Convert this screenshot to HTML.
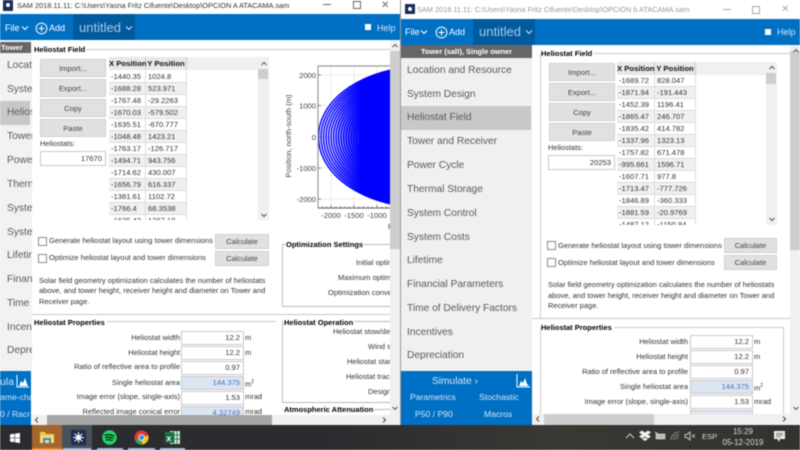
<!DOCTYPE html>
<html><head><meta charset="utf-8"><style>
html,body{margin:0;padding:0;width:800px;height:450px;overflow:hidden;background:#fff}
body{font-family:"Liberation Sans",sans-serif;position:relative;filter:blur(.4px)}
div,span.a{position:absolute}
.t{position:absolute;white-space:nowrap;line-height:12px;font-size:7.5px;color:#333}
.r{text-align:right}
.c{text-align:center}
.b{font-weight:bold;color:#000}
.n{font-size:10.2px;color:#5a5a5a;line-height:14px;left:7px;white-space:nowrap;position:absolute}
.btn{background:#e1e1e1;border:1px solid #d0d0d0;box-sizing:border-box;text-align:center;font-size:7.6px;color:#444;white-space:nowrap}
.in{background:#fff;border:1px solid #c8c8c8;box-sizing:border-box;text-align:right;font-size:7.6px;color:#333;padding-right:3px;white-space:nowrap}
.ro{background:#dce6f2;color:#4a6fc0}
.cb{width:9px;height:9px;border:1px solid #8c8c8c;background:#fff;box-sizing:border-box}
.row{left:0;height:12px;line-height:12px;font-size:7.6px;color:#333;background:#fff;border-bottom:1px solid #ddd;border-right:1px solid #ddd;box-sizing:border-box;white-space:nowrap;padding-left:2px}
.g{background:#f0f0f0}
.hd{font-weight:bold;font-size:7.7px;background:#e8e8e8;line-height:13px;height:13px;color:#111;border-right:1px solid #ccc;box-sizing:border-box;text-align:center;white-space:nowrap;top:0}
</style></head><body>

<!-- LEFT WINDOW -->
<div style="left:0;top:0;width:400px;height:425px;background:#fff;overflow:hidden">
<div style="left:3px;top:0;width:10px;height:11px;background:#1d2c55"></div>
<div style="left:6px;top:3px;width:4px;height:4px;background:#fff;border-radius:50%"></div>
<div class="t" style="left:17px;top:0;font-size:7.35px;color:#333">SAM 2018.11.11: C:\Users\Yasna Fritz Cifuente\Desktop\OPCION A ATACAMA.sam</div>
<div style="left:323px;top:4px;width:8px;height:1px;background:#666"></div>
<div style="left:353px;top:1px;width:6px;height:6px;border:1px solid #666"></div>
<div class="t" style="left:381px;top:0;font-size:10px;color:#666">✕</div>

<div style="left:0;top:14px;width:400px;height:26px;background:#0070c4"></div>
<div style="left:73px;top:14px;width:62px;height:26px;background:#005a9e"></div>
<div class="t" style="left:5px;top:22px;font-size:9px;color:#fff">File</div>
<svg style="position:absolute;left:21px;top:25px" width="8" height="6"><path d="M1 1.5L4 4.5L7 1.5" fill="none" stroke="#fff" stroke-width="1.1"/></svg>
<svg style="position:absolute;left:35px;top:22px" width="13" height="13"><circle cx="6.5" cy="6.5" r="5.4" fill="none" stroke="#fff"/><path d="M6.5 3.5V9.5M3.5 6.5H9.5" stroke="#fff"/></svg>
<div class="t" style="left:49px;top:22px;font-size:9px;color:#fff">Add</div>
<div class="t" style="left:79px;top:21px;font-size:13px;line-height:14px;color:#a9c8e6">untitled</div>
<svg style="position:absolute;left:125px;top:25px" width="8" height="6"><path d="M1 1.5L4 4.5L7 1.5" fill="none" stroke="#cfe0f0" stroke-width="1.1"/></svg>
<div style="left:365px;top:24px;width:6px;height:6px;background:#fff"></div>
<div class="t" style="left:377px;top:22px;font-size:9px;color:#d5e5f5">Help</div>

<div style="left:0;top:40px;width:32px;height:331px;background:#f2f2f2;overflow:hidden">
<div style="left:0;top:2px;width:31px;height:11px;background:#666"></div>
<div class="t" style="left:1px;top:2px;font-size:7.6px;font-weight:bold;color:#fff;line-height:11px">Tower</div>
<div style="left:0;top:61px;width:30px;height:24px;background:#c8c8c8"></div>
<div class="n" style="top:19px">Location and Resource</div>
<div class="n" style="top:43px">System Design</div>
<div class="n" style="top:66px">Heliostat Field</div>
<div class="n" style="top:90px">Tower and Receiver</div>
<div class="n" style="top:114px">Power Cycle</div>
<div class="n" style="top:138px">Thermal Storage</div>
<div class="n" style="top:162px">System Control</div>
<div class="n" style="top:186px">System Costs</div>
<div class="n" style="top:209px">Lifetime</div>
<div class="n" style="top:233px">Financial Parameters</div>
<div class="n" style="top:257px">Time of Delivery Factors</div>
<div class="n" style="top:281px">Incentives</div>
<div class="n" style="top:304px">Depreciation</div>
</div>
<div style="left:0;top:371px;width:31px;height:54px;background:#0070c4;overflow:hidden">
<div class="t" style="left:0;top:5px;font-size:10.5px;color:#d5e5f5">ula</div>
<svg style="position:absolute;left:16px;top:4px" width="14" height="13"><path d="M1 0V12H13" fill="none" stroke="#fff"/><path d="M3 11L5 6L7 8L9 3L11 9L12 11Z" fill="#fff"/></svg>
<div class="t" style="left:0;top:20px;font-size:8.6px;color:#d5e5f5">ame-cha</div>
<div class="t" style="left:0;top:37px;font-size:8.6px;color:#d5e5f5">0 / Racr</div>
</div>

<!-- left content -->
<div style="left:32px;top:40px;width:358px;height:375px;overflow:hidden;background:#fff">
<div style="left:2px;top:9px;width:356px;height:1px;background:#ccc"></div>
<div class="t b" style="left:2px;top:4px;background:#fff;padding-right:1px;font-weight:bold">Heliostat Field</div>
<div class="btn" style="left:8px;top:19px;width:66px;height:18px;line-height:17px">Import...</div>
<div class="btn" style="left:8px;top:39px;width:66px;height:18px;line-height:17px">Export...</div>
<div class="btn" style="left:8px;top:59px;width:66px;height:18px;line-height:17px">Copy</div>
<div class="btn" style="left:8px;top:79px;width:66px;height:18px;line-height:17px">Paste</div>
<div class="t" style="left:8px;top:98px">Heliostats:</div>
<div class="in" style="left:8px;top:111px;width:66px;height:15px;line-height:13px">17670</div>

<div style="left:77px;top:17px;width:160px;height:163px;background:#fff;overflow:hidden">
<div class="hd" style="left:0;width:37px;">X Position</div>
<div class="hd" style="left:37px;width:41px;">Y Position</div>
<div style="left:78px;top:0;width:72px;height:13px;background:#f0f0f0"></div>
<div style="left:149px;top:0;width:11px;height:163px;background:#f0f0f0"></div>
<div style="left:0;top:14px;width:37px"><div class="row" style="top:0;width:37px">-1440.35</div><div class="row g" style="top:12px;width:37px">-1688.28</div><div class="row" style="top:24px;width:37px">-1767.48</div><div class="row g" style="top:36px;width:37px">-1670.03</div><div class="row" style="top:48px;width:37px">-1635.51</div><div class="row g" style="top:60px;width:37px">-1048.48</div><div class="row" style="top:72px;width:37px">-1763.17</div><div class="row g" style="top:84px;width:37px">-1494.71</div><div class="row" style="top:96px;width:37px">-1714.62</div><div class="row g" style="top:108px;width:37px">-1656.79</div><div class="row" style="top:120px;width:37px">-1381.61</div><div class="row g" style="top:132px;width:37px">-1766.4</div><div class="row" style="top:144px;width:37px">-1635.42</div></div>
<div style="left:37px;top:14px;width:41px"><div class="row" style="top:0;width:41px">1024.8</div><div class="row g" style="top:12px;width:41px">523.971</div><div class="row" style="top:24px;width:41px">-29.2263</div><div class="row g" style="top:36px;width:41px">-579.502</div><div class="row" style="top:48px;width:41px">-670.777</div><div class="row g" style="top:60px;width:41px">1423.21</div><div class="row" style="top:72px;width:41px">-126.717</div><div class="row g" style="top:84px;width:41px">943.756</div><div class="row" style="top:96px;width:41px">430.007</div><div class="row g" style="top:108px;width:41px">616.337</div><div class="row" style="top:120px;width:41px">1102.72</div><div class="row g" style="top:132px;width:41px">68.3538</div><div class="row" style="top:144px;width:41px">1267.18</div></div>
<svg style="position:absolute;left:150px;top:3px" width="10" height="8"><path d="M2.5 5L5 2.5L7.5 5" fill="none" stroke="#555"/></svg>
<div style="left:149px;top:12px;width:10px;height:10px;background:#cdcdcd"></div>
<svg style="position:absolute;left:150px;top:154px" width="10" height="8"><path d="M2.5 3L5 5.5L7.5 3" fill="none" stroke="#555"/></svg>
</div>

<div class="cb" style="left:6px;top:197px"></div>
<div class="t" style="left:17px;top:195px">Generate heliostat layout using tower dimensions</div>
<div class="btn" style="left:183px;top:194px;width:54px;height:15px;line-height:14px">Calculate</div>
<div class="cb" style="left:6px;top:214px"></div>
<div class="t" style="left:17px;top:212px">Optimize heliostat layout and tower dimensions</div>
<div class="btn" style="left:183px;top:211px;width:54px;height:15px;line-height:14px">Calculate</div>
<div class="t" style="left:7px;top:235px">Solar field geometry optimization calculates the number of heliostats</div>
<div class="t" style="left:7px;top:245px">above, and tower height, receiver height and diameter on Tower and</div>
<div class="t" style="left:7px;top:256px">Receiver page.</div>
<div style="left:0;top:274px;width:358px;height:1px;background:#c8c8c8"></div>

<div style="left:2px;top:281px;width:242px;height:1px;background:#ccc"></div>
<div class="t b" style="left:2px;top:277px;background:#fff;padding-right:2px;font-weight:bold">Heliostat Properties</div>
<div class="t r" style="left:0;width:148px;top:292px">Heliostat width</div>
<div class="in" style="left:149px;top:291px;width:63px;height:14px;line-height:12px">12.2</div><div class="t" style="left:213px;top:292px">m</div>
<div class="t r" style="left:0;width:148px;top:307px">Heliostat height</div>
<div class="in" style="left:149px;top:306px;width:63px;height:14px;line-height:12px">12.2</div><div class="t" style="left:213px;top:307px">m</div>
<div class="t r" style="left:0;width:148px;top:321px">Ratio of reflective area to profile</div>
<div class="in" style="left:149px;top:321px;width:63px;height:14px;line-height:12px">0.97</div>
<div class="t r" style="left:0;width:148px;top:337px">Single heliostat area</div>
<div class="in ro" style="left:149px;top:336px;width:63px;height:14px;line-height:12px">144.375</div><div class="t" style="left:213px;top:336px">m<sup style="font-size:5px">2</sup></div>
<div class="t r" style="left:0;width:148px;top:351px">Image error (slope, single-axis)</div>
<div class="in" style="left:149px;top:351px;width:63px;height:14px;line-height:12px">1.53</div><div class="t" style="left:213px;top:351px">mrad</div>
<div class="t r" style="left:0;width:148px;top:366px">Reflected image conical error</div>
<div class="in ro" style="left:149px;top:366px;width:63px;height:14px;line-height:12px">4.32749</div><div class="t" style="left:213px;top:366px">mrad</div>

<!-- plot -->
<svg style="position:absolute;left:250px;top:20px" width="108" height="180" viewBox="282 60 108 180">
<defs><linearGradient id="lg" gradientUnits="userSpaceOnUse" x1="332" y1="0" x2="360" y2="0"><stop offset="0" stop-color="#0000ff" stop-opacity="0"/><stop offset="1" stop-color="#0000ff"/></linearGradient></defs>
<rect x="318" y="66" width="72" height="142" fill="#fff"/>
<path d="M331 66V208M354 66V208M377 66V208M318 75H390M318 105.5H390M318 137H390M318 168H390M318 199H390" stroke="#e6e6e6" stroke-width=".7"/>
<g fill="none" stroke="#0000ff" stroke-width="1.45">
<ellipse cx="424" cy="137" rx="105.5" ry="70.5"/><ellipse cx="424" cy="137" rx="103" ry="68.6"/><ellipse cx="424" cy="137" rx="100.5" ry="66.8"/><ellipse cx="424" cy="137" rx="98" ry="65"/><ellipse cx="424" cy="137" rx="95.5" ry="63.2"/><ellipse cx="424" cy="137" rx="93" ry="61.4"/><ellipse cx="424" cy="137" rx="90.5" ry="59.6"/><ellipse cx="424" cy="137" rx="88" ry="57.8"/><ellipse cx="424" cy="137" rx="85.5" ry="56"/><ellipse cx="424" cy="137" rx="83" ry="54.2"/><ellipse cx="424" cy="137" rx="80.5" ry="52.4"/><ellipse cx="424" cy="137" rx="78" ry="50.6"/><ellipse cx="424" cy="137" rx="75.5" ry="48.8"/><ellipse cx="424" cy="137" rx="73" ry="47"/><ellipse cx="424" cy="137" rx="70.5" ry="45.2"/><ellipse cx="424" cy="137" rx="68" ry="43.4"/>
</g>
<ellipse cx="424" cy="137" rx="105" ry="70.2" fill="url(#lg)"/>
<path d="M318 208V66H390" fill="none" stroke="#9a9a9a" stroke-width="1.2"/>
<path d="M318 208H390" stroke="#777" stroke-width="1.2"/>
<path d="M318 75h3M318 105.5h3M318 137h3M318 168h3M318 199h3M331 208v-3M354 208v-3M377 208v-3M322.500 208v-1.500M326.500 208v-1.500M336 208v-1.500M340.500 208v-1.500M345 208v-1.500M349.500 208v-1.500M359 208v-1.500M363.500 208v-1.500M368 208v-1.500M372.500 208v-1.500M382 208v-1.500M386.500 208v-1.500" stroke="#666" stroke-width=".8"/>
<g font-family="Liberation Sans" font-size="7.6" fill="#444" text-anchor="end">
<text x="316" y="78">2000</text><text x="316" y="108.500">1000</text><text x="316" y="140">0</text><text x="316" y="171">-1000</text><text x="316" y="202">-2000</text>
</g>
<g font-family="Liberation Sans" font-size="7.6" fill="#444" text-anchor="middle">
<text x="331" y="218">-2000</text><text x="354" y="218">-1500</text><text x="377" y="218">-1000</text>
</g>
<text x="388" y="229" font-family="Liberation Sans" font-size="7.6" fill="#444">Position</text>
<text transform="translate(291,136) rotate(-90)" font-family="Liberation Sans" font-size="7.6" fill="#444" text-anchor="middle">Position, north-south (m)</text>
</svg>

<!-- Optimization settings -->
<div style="left:250px;top:204px;width:120px;height:63px;border:1px solid #bbb;box-sizing:border-box"></div>
<div class="t b" style="left:253px;top:199px;background:#fff;padding:0 1px;font-weight:bold">Optimization Settings</div>
<div class="t" style="left:324px;top:217px">Initial optimization step</div>
<div class="t" style="left:306px;top:232px">Maximum optimization</div>
<div class="t" style="left:296px;top:247px">Optimization convergence</div>

<!-- Heliostat operation -->
<div style="left:250px;top:281px;width:120px;height:82px;border:1px solid #bbb;box-sizing:border-box"></div>
<div class="t b" style="left:251px;top:277px;background:#fff;padding:0 1px;font-weight:bold">Heliostat Operation</div>
<div class="t" style="left:301px;top:286px">Heliostat stow/deploy angle</div>
<div class="t" style="left:336px;top:301px">Wind stow speed</div>
<div class="t" style="left:315px;top:316px">Heliostat startup energy</div>
<div class="t" style="left:314px;top:331px">Heliostat tracking power</div>
<div class="t" style="left:336px;top:346px">Design point</div>
<div style="left:250px;top:369px;width:108px;height:1px;background:#bbb"></div>
<div class="t b" style="left:251px;top:364px;background:#fff;padding:0 1px;font-weight:bold">Atmospheric Attenuation</div>
</div>

<!-- left scrollbars -->
<div style="left:390px;top:40px;width:10px;height:385px;background:#f0f0f0"></div>
<div style="left:390px;top:51px;width:10px;height:198px;background:#cdcdcd"></div>
<svg style="position:absolute;left:390px;top:42px" width="10" height="8"><path d="M2.5 5L5 2.5L7.5 5" fill="none" stroke="#555"/></svg>
<svg style="position:absolute;left:390px;top:404px" width="10" height="8"><path d="M2.5 3L5 5.5L7.5 3" fill="none" stroke="#555"/></svg>
<div style="left:32px;top:415px;width:368px;height:10px;background:#f0f0f0"></div>
<div style="left:47px;top:415px;width:225px;height:10px;background:#a6a6a6"></div>
<svg style="position:absolute;left:33px;top:416px" width="8" height="8"><path d="M5 1.5L2.5 4L5 6.5" fill="none" stroke="#444"/></svg>
<svg style="position:absolute;left:380px;top:416px" width="8" height="8"><path d="M3 1.5L5.5 4L3 6.5" fill="none" stroke="#444"/></svg>
</div>

<!-- RIGHT WINDOW -->
<div style="left:400px;top:0;width:400px;height:425px;background:#fff;overflow:hidden;border-left:1px solid #999;box-sizing:border-box">
<div style="left:4px;top:4px;width:10px;height:10px;background:#1d2c55"></div>
<div style="left:7px;top:7px;width:4px;height:4px;background:#fff;border-radius:50%"></div>
<div class="t" style="left:16px;top:4px;font-size:7.35px;color:#999">SAM 2018.11.11: C:\Users\Yasna Fritz Cifuente\Desktop\OPCION b ATACAMA.sam</div>
<div style="left:322px;top:9px;width:8px;height:1px;background:#aaa"></div>
<div style="left:351px;top:6px;width:6px;height:6px;border:1px solid #aaa"></div>
<div class="t" style="left:380px;top:4px;font-size:10px;color:#aaa">✕</div>

<div style="left:0;top:19px;width:400px;height:26px;background:#0070c4"></div>
<div style="left:72px;top:19px;width:62px;height:26px;background:#005a9e"></div>
<div class="t" style="left:4px;top:26px;font-size:9px;color:#fff">File</div>
<svg style="position:absolute;left:19px;top:29px" width="8" height="6"><path d="M1 1.5L4 4.5L7 1.5" fill="none" stroke="#fff" stroke-width="1.1"/></svg>
<svg style="position:absolute;left:34px;top:26px" width="13" height="13"><circle cx="6.5" cy="6.5" r="5.4" fill="none" stroke="#fff"/><path d="M6.5 3.5V9.5M3.5 6.5H9.5" stroke="#fff"/></svg>
<div class="t" style="left:48px;top:26px;font-size:9px;color:#fff">Add</div>
<div class="t" style="left:78px;top:25px;font-size:13px;line-height:14px;color:#a9c8e6">untitled</div>
<svg style="position:absolute;left:124px;top:29px" width="8" height="6"><path d="M1 1.5L4 4.5L7 1.5" fill="none" stroke="#cfe0f0" stroke-width="1.1"/></svg>
<div style="left:364px;top:29px;width:6px;height:6px;background:#fff"></div>
<div class="t" style="left:376px;top:26px;font-size:9px;color:#d5e5f5">Help</div>

<div style="left:0;top:45px;width:131px;height:326px;background:#f0f0f0;overflow:hidden">
<div style="left:0;top:0;width:131px;height:13px;background:#666"></div>
<div class="t c" style="left:0;width:131px;top:1px;font-size:7.4px;font-weight:bold;color:#fff">Tower (salt), Single owner</div>
<div style="left:0;top:61px;width:130px;height:24px;background:#c8c8c8"></div>
<div class="n" style="left:6px;top:19px">Location and Resource</div>
<div class="n" style="left:6px;top:43px">System Design</div>
<div class="n" style="left:6px;top:66px">Heliostat Field</div>
<div class="n" style="left:6px;top:90px">Tower and Receiver</div>
<div class="n" style="left:6px;top:114px">Power Cycle</div>
<div class="n" style="left:6px;top:138px">Thermal Storage</div>
<div class="n" style="left:6px;top:162px">System Control</div>
<div class="n" style="left:6px;top:186px">System Costs</div>
<div class="n" style="left:6px;top:209px">Lifetime</div>
<div class="n" style="left:6px;top:233px">Financial Parameters</div>
<div class="n" style="left:6px;top:257px">Time of Delivery Factors</div>
<div class="n" style="left:6px;top:281px">Incentives</div>
<div class="n" style="left:6px;top:304px">Depreciation</div>
</div>
<div style="left:0;top:371px;width:131px;height:54px;background:#0070c4;overflow:hidden">
<div class="t" style="left:31px;top:5px;font-size:10.2px;color:#d5e5f5">Simulate ›</div>
<svg style="position:absolute;left:115px;top:3px" width="14" height="14"><path d="M1 0V13H14" fill="none" stroke="#fff"/><path d="M3 12L5 7L7 9L9 4L11 10L13 12Z" fill="#fff"/></svg>
<div class="t" style="left:9px;top:20px;font-size:8.6px;color:#d5e5f5">Parametrics</div>
<div class="t" style="left:78px;top:20px;font-size:8.6px;color:#d5e5f5">Stochastic</div>
<div class="t" style="left:14px;top:37px;font-size:8.6px;color:#d5e5f5">P50 / P90</div>
<div class="t" style="left:83px;top:37px;font-size:8.6px;color:#d5e5f5">Macros</div>
</div>

<!-- right content -->
<div style="left:131px;top:45px;width:258px;height:369px;overflow:hidden;background:#fff">
<div style="left:8px;top:8px;width:250px;height:1px;background:#ccc"></div>
<div style="left:8px;top:8px;width:1px;height:265px;background:#ccc"></div>
<div class="t b" style="left:9px;top:3px;background:#fff;padding-right:1px;font-weight:bold">Heliostat Field</div>
<div class="btn" style="left:17px;top:18px;width:66px;height:18px;line-height:17px">Import...</div>
<div class="btn" style="left:17px;top:38px;width:66px;height:18px;line-height:17px">Export...</div>
<div class="btn" style="left:17px;top:58px;width:66px;height:18px;line-height:17px">Copy</div>
<div class="btn" style="left:17px;top:78px;width:66px;height:18px;line-height:17px">Paste</div>
<div class="t" style="left:16px;top:97px">Heliostats:</div>
<div class="in" style="left:16px;top:110px;width:67px;height:15px;line-height:13px">20253</div>

<div style="left:85px;top:17px;width:160px;height:163px;background:#fff;overflow:hidden">
<div class="hd" style="left:0;width:38px;">X Position</div>
<div class="hd" style="left:38px;width:41px;">Y Position</div>
<div style="left:79px;top:0;width:81px;height:13px;background:#f0f0f0"></div>
<div style="left:0;top:13px;width:38px"><div class="row" style="top:0;width:38px">-1689.72</div><div class="row g" style="top:12px;width:38px">-1871.94</div><div class="row" style="top:24px;width:38px">-1452.39</div><div class="row g" style="top:36px;width:38px">-1865.47</div><div class="row" style="top:48px;width:38px">-1835.42</div><div class="row g" style="top:60px;width:38px">-1337.96</div><div class="row" style="top:72px;width:38px">-1757.82</div><div class="row g" style="top:84px;width:38px">-995.661</div><div class="row" style="top:96px;width:38px">-1607.71</div><div class="row g" style="top:108px;width:38px">-1713.47</div><div class="row" style="top:120px;width:38px">-1846.89</div><div class="row g" style="top:132px;width:38px">-1881.59</div><div class="row" style="top:144px;width:38px">-1487.12</div></div>
<div style="left:38px;top:13px;width:41px"><div class="row" style="top:0;width:41px">828.047</div><div class="row g" style="top:12px;width:41px">-191.443</div><div class="row" style="top:24px;width:41px">1196.41</div><div class="row g" style="top:36px;width:41px">246.707</div><div class="row" style="top:48px;width:41px">414.782</div><div class="row g" style="top:60px;width:41px">1323.13</div><div class="row" style="top:72px;width:41px">671.478</div><div class="row g" style="top:84px;width:41px">1596.71</div><div class="row" style="top:96px;width:41px">977.8</div><div class="row g" style="top:108px;width:41px">-777.726</div><div class="row" style="top:120px;width:41px">-360.333</div><div class="row g" style="top:132px;width:41px">-20.9769</div><div class="row" style="top:144px;width:41px">-1150.84</div></div>
<div style="left:149px;top:0;width:11px;height:163px;background:#f0f0f0"></div>
<svg style="position:absolute;left:150px;top:2px" width="10" height="8"><path d="M2.5 5L5 2.5L7.5 5" fill="none" stroke="#555"/></svg>
<div style="left:149px;top:11px;width:10px;height:11px;background:#cdcdcd"></div>
<svg style="position:absolute;left:150px;top:153px" width="10" height="8"><path d="M2.5 3L5 5.5L7.5 3" fill="none" stroke="#555"/></svg>
</div>

<div class="cb" style="left:15px;top:196px"></div>
<div class="t" style="left:26px;top:195px">Generate heliostat layout using tower dimensions</div>
<div class="btn" style="left:192px;top:193px;width:53px;height:15px;line-height:14px">Calculate</div>
<div class="cb" style="left:15px;top:213px"></div>
<div class="t" style="left:26px;top:212px">Optimize heliostat layout and tower dimensions</div>
<div class="btn" style="left:192px;top:210px;width:53px;height:15px;line-height:14px">Calculate</div>
<div class="t" style="left:16px;top:234px">Solar field geometry optimization calculates the number of heliostats</div>
<div class="t" style="left:16px;top:245px">above, and tower height, receiver height and diameter on Tower and</div>
<div class="t" style="left:16px;top:255px">Receiver page.</div>
<div style="left:0;top:273px;width:258px;height:1px;background:#c8c8c8"></div>

<div style="left:8px;top:282px;width:244px;height:88px;border:1px solid #ccc;box-sizing:border-box"></div>
<div class="t b" style="left:9px;top:277px;background:#fff;padding-right:2px;font-weight:bold">Heliostat Properties</div>
<div class="t r" style="left:0;width:156px;top:291px">Heliostat width</div>
<div class="in" style="left:158px;top:290px;width:63px;height:14px;line-height:12px">12.2</div><div class="t" style="left:222px;top:291px">m</div>
<div class="t r" style="left:0;width:156px;top:306px">Heliostat height</div>
<div class="in" style="left:158px;top:305px;width:63px;height:14px;line-height:12px">12.2</div><div class="t" style="left:222px;top:306px">m</div>
<div class="t r" style="left:0;width:156px;top:321px">Ratio of reflective area to profile</div>
<div class="in" style="left:158px;top:320px;width:63px;height:14px;line-height:12px">0.97</div>
<div class="t r" style="left:0;width:156px;top:336px">Single heliostat area</div>
<div class="in ro" style="left:158px;top:335px;width:63px;height:14px;line-height:12px">144.375</div><div class="t" style="left:222px;top:335px">m<sup style="font-size:5px">2</sup></div>
<div class="t r" style="left:0;width:156px;top:351px">Image error (slope, single-axis)</div>
<div class="in" style="left:158px;top:350px;width:63px;height:14px;line-height:12px">1.53</div><div class="t" style="left:222px;top:351px">mrad</div>
<div class="in ro" style="left:158px;top:365px;width:63px;height:14px"></div>
</div>

<!-- right scrollbars -->
<div style="left:389px;top:45px;width:11px;height:380px;background:#f0f0f0"></div>
<div style="left:389px;top:51px;width:11px;height:199px;background:#cdcdcd"></div>
<svg style="position:absolute;left:390px;top:47px" width="10" height="8"><path d="M2.5 5L5 2.5L7.5 5" fill="none" stroke="#555"/></svg>
<svg style="position:absolute;left:390px;top:404px" width="10" height="8"><path d="M2.5 3L5 5.5L7.5 3" fill="none" stroke="#555"/></svg>
<div style="left:131px;top:414px;width:269px;height:11px;background:#f0f0f0"></div>
<div style="left:143px;top:414px;width:110px;height:11px;background:#cdcdcd"></div>
<svg style="position:absolute;left:133px;top:415px" width="8" height="8"><path d="M5 1.5L2.5 4L5 6.5" fill="none" stroke="#444"/></svg>
<svg style="position:absolute;left:379px;top:415px" width="8" height="8"><path d="M3 1.5L5.5 4L3 6.5" fill="none" stroke="#444"/></svg>
</div>

<!-- TASKBAR -->
<div style="left:0;top:425px;width:800px;height:25px;background:linear-gradient(90deg,#2a2c31 0%,#2b2c30 40%,#3a3833 70%,#34322f 100%)">
<svg style="position:absolute;left:10px;top:8px" width="10" height="10"><path d="M0 1.4L4.4 .7V4.7H0ZM5 .6L10 0V4.7H5ZM0 5.3H4.4V9.3L0 8.6ZM5 5.3H10V10L5 9.4Z" fill="#fff"/></svg>
<div style="left:32px;top:0;width:30px;height:25px;background:#a5652e"></div>
<div style="left:32px;top:23px;width:30px;height:2px;background:#f08a24"></div>
<svg style="position:absolute;left:40px;top:6px" width="14" height="13"><path d="M0 1H5L6 3H14V12H0Z" fill="#f5c84c"/><rect x="0" y="5" width="14" height="7" fill="#ffd970"/><rect x="3" y="7" width="8" height="5" fill="#2a8fd8"/><rect x="5" y="9" width="4" height="3" fill="#ffd970"/></svg>
<div style="left:62px;top:0;width:30px;height:25px;background:#4a5058"></div>
<div style="left:63px;top:23px;width:28px;height:2px;background:#8fbce0"></div>
<div style="left:71px;top:5px;width:15px;height:15px;background:#1d2c55"></div>
<svg style="position:absolute;left:71px;top:5px" width="15" height="15"><circle cx="7.5" cy="7.5" r="2.6" fill="#fff"/><path d="M7.5 2V13M2 7.5H13M3.6 3.6L11.4 11.4M11.4 3.6L3.6 11.4" stroke="#fff"/></svg>
<svg style="position:absolute;left:102px;top:5px" width="15" height="15"><circle cx="7.5" cy="7.5" r="7.2" fill="#1ed760"/><path d="M3 5.2C6 4.3 9.5 4.6 12 6M3.6 7.7C6 7 9 7.3 11.2 8.4M4.2 10C6.2 9.5 8.5 9.7 10.2 10.6" fill="none" stroke="#111" stroke-width="1.2" stroke-linecap="round"/></svg>
<div style="left:97px;top:23px;width:26px;height:2px;background:#8fbce0"></div>
<svg style="position:absolute;left:134px;top:5px" width="15" height="15"><circle cx="7.5" cy="7.5" r="7" fill="#e4392b"/><path d="M7.5 7.5L1.2 10.6A7 7 0 0 0 8 14.5Z" fill="#2fa84f"/><path d="M7.5 7.5L8 14.5A7 7 0 0 0 14.3 5.5Z" fill="#f7c51c"/><circle cx="7.5" cy="7.5" r="3.3" fill="#fff"/><circle cx="7.5" cy="7.5" r="2.5" fill="#4285f4"/></svg>
<div style="left:128px;top:23px;width:27px;height:2px;background:#8fbce0"></div>
<svg style="position:absolute;left:165px;top:5px" width="15" height="15"><rect x="5" y="1" width="10" height="13" fill="#cfe8d8"/><path d="M9 1V14M12 1V14M5 5H15M5 9H15" stroke="#1d6f42" stroke-width=".8"/><rect x="0" y="2" width="9" height="11" fill="#1d6f42"/><text x="1.5" y="11" font-family="Liberation Sans" font-size="8.5" font-weight="bold" fill="#fff">x</text></svg>
<div style="left:160px;top:23px;width:25px;height:2px;background:#8fbce0"></div>

<svg style="position:absolute;left:625px;top:7px" width="10" height="8"><path d="M1 6L5 2L9 6" fill="none" stroke="#ccc"/></svg>
<svg style="position:absolute;left:639px;top:5px" width="12" height="11"><path d="M3 .5L6 2.5L9 .5L12 2.5L9 4.5L12 6.5L9 8.5L6 6.5L3 8.5L0 6.5L3 4.5L0 2.5ZM3 9L6 7.5L9 9L6 11Z" fill="#eee"/></svg>
<svg style="position:absolute;left:654px;top:6px" width="12" height="10"><rect x="2" y="3" width="9" height="5" fill="#bbb" stroke="#ddd" stroke-width=".6"/><path d="M1 1L4 3" stroke="#ddd"/></svg>
<svg style="position:absolute;left:670px;top:6px" width="11" height="10"><path d="M1 9A8 8 0 0 1 9 1M3.5 9A5.5 5.5 0 0 1 9 3.5M6 9A3 3 0 0 1 9 6" fill="none" stroke="#888"/></svg>
<svg style="position:absolute;left:684px;top:6px" width="12" height="10"><path d="M1 3.5H3L6 1V9L3 6.500H1Z" fill="none" stroke="#ccc" stroke-width=".9"/><path d="M8 3.500L11 6.500M11 3.500L8 6.500" stroke="#ccc" stroke-width=".8"/></svg>
<div class="t" style="left:702px;top:6px;font-size:7.6px;color:#ddd">ESP</div>
<div class="t c" style="left:720px;width:46px;top:1px;font-size:8px;color:#ddd">15:29</div>
<div class="t c" style="left:720px;width:46px;top:12px;font-size:8px;color:#ddd">05-12-2019</div>
<svg style="position:absolute;left:773px;top:5px" width="13" height="13"><path d="M1 1H12V9H7L6 12L4.500 9H1Z" fill="#eee"/><path d="M3 3.300H10M3 5H10M3 6.800H8" stroke="#555" stroke-width=".7"/></svg>
</div>
</body></html>
